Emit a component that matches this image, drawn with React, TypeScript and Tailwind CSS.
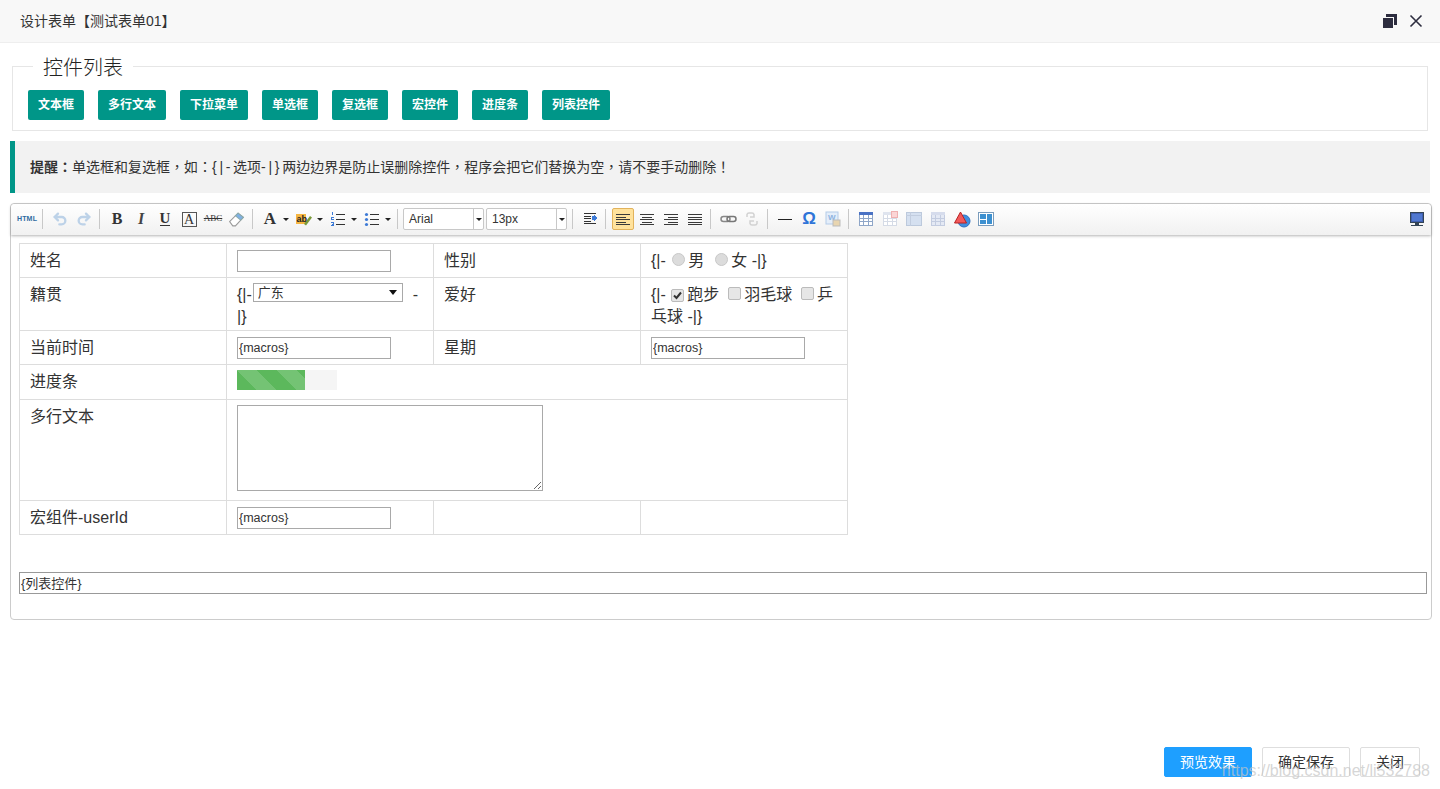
import type { ReactNode } from "react";
import { Redo2, Undo2 } from "lucide-react";

const font = "font-['Liberation_Sans','Noto_Sans_CJK_SC',sans-serif]";
const serif = "font-['Liberation_Serif',serif]";

const controls = ["文本框", "多行文本", "下拉菜单", "单选框", "复选框", "宏控件", "进度条", "列表控件"];

const Sep = () => <span className="ml-[3px] mr-[5px] h-[20px] w-px shrink-0 bg-[#c8c8c8]" />;

const Slot = ({ children, active }: { children: ReactNode; active?: boolean }) => (
  <span
    className={`flex h-[22px] shrink-0 items-center justify-center rounded-[2px] ${
      active ? "mx-px w-[22px] border border-[#e2b35c] bg-[#ffe29c]" : "w-[24px]"
    }`}
  >
    {children}
  </span>
);

const Caret = () => (
  <span className="flex h-[22px] w-[10px] shrink-0 items-center pl-px">
    <span className="h-0 w-0 border-x-[3px] border-t-[3px] border-x-transparent border-t-[#222]" />
  </span>
);

const Lines = ({ align }: { align: "left" | "center" | "right" | "full" }) => {
  const x = align === "center" ? 3 : align === "right" ? 5 : 1;
  const w = align === "full" ? 14 : 10;
  const rows = [
    [1, 14],
    [x, w],
    [1, 14],
    [x, w],
    [1, 14],
  ];
  return (
    <svg width="16" height="16" viewBox="0 0 16 16" shapeRendering="crispEdges">
      {rows.map(([rx, rw], i) => (
        <rect key={i} x={rx} y={3 + i * 2.5} width={rw} height="1" fill="#3a3a3a" />
      ))}
    </svg>
  );
};

const SelectBox = ({ label }: { label: string }) => (
  <span className="flex h-[22px] w-[81px] shrink-0 rounded-[2px] border border-[#c8c8c8] bg-white text-[12px] text-[#333]">
    <span className="flex-1 pl-[5px] leading-[20px]">{label}</span>
    <span className="flex w-[10px] items-center justify-center border-l border-[#c8c8c8]">
      <span className="h-0 w-0 border-x-[3px] border-t-[3px] border-x-transparent border-t-[#222]" />
    </span>
  </span>
);

const TableIcon = ({ head = "#4a72c4", grid = "#8fa6c8", fill = "#fff" }: { head?: string; grid?: string; fill?: string }) => (
  <svg width="14" height="14" viewBox="0 0 14 14" shapeRendering="crispEdges">
    <rect x="0.5" y="0.5" width="13" height="13" fill={fill} stroke={grid} />
    <rect x="0" y="0" width="14" height="3" fill={head} />
    <path d="M0 6.5h14M0 9.5h14M4.5 3v11M9.5 3v11" stroke={grid} fill="none" />
  </svg>
);

const Toolbar = () => (
  <div className="flex h-[31px] items-center rounded-t-[4px] bg-gradient-to-b from-white to-[#f1f1f1] pb-px pl-[4px] pr-[2px] shadow-[0_1px_3px_rgba(0,0,0,0.3)]">
    <Slot>
      <span className="text-[7px] font-bold tracking-[0.2px] text-[#2d6aa0]">HTML</span>
    </Slot>
    <Sep />
    <Slot>
      <Undo2 size={16} strokeWidth={3.5} className="text-[#bdd2e8]" />
    </Slot>
    <Slot>
      <Redo2 size={16} strokeWidth={3.5} className="text-[#bdd2e8]" />
    </Slot>
    <Sep />
    <Slot>
      <span className={`${serif} text-[16px] font-bold text-[#333]`}>B</span>
    </Slot>
    <Slot>
      <span className={`${serif} text-[16px] font-bold italic text-[#444]`}>I</span>
    </Slot>
    <Slot>
      <span className={`${serif} border-b border-[#333] text-[15px] leading-[13px] font-bold text-[#333]`}>U</span>
    </Slot>
    <Slot>
      <span className={`${serif} flex h-[15px] w-[15px] items-center justify-center border border-[#555] text-[14px] text-[#333]`}>A</span>
    </Slot>
    <Slot>
      <span className={`${serif} text-[9px] text-[#333] line-through`}>ABC</span>
    </Slot>
    <Slot>
      <svg width="18" height="18" viewBox="0 0 17 17">
        <path d="M1.5 11 9.5 3l5 4-7.5 8H4.500z" fill="#fff" stroke="#999" />
        <path d="M7 5.500 9.500 3l5 4L12 9.500z" fill="#7fb0e6" stroke="#8aa" />
      </svg>
    </Slot>
    <Sep />
    <Slot>
      <span className={`${serif} text-[17px] font-bold text-[#333]`}>A</span>
    </Slot>
    <Caret />
    <Slot>
      <svg width="17" height="15" viewBox="0 0 17 15">
        <rect x="0" y="2" width="10" height="10" fill="#f5b642" />
        <path d="M8 12l6-8 2 1.500-6 8z" fill="#7a9a3a" />
        <text x="0.500" y="10" fontSize="9" fontWeight="700" fill="#222" fontFamily="Liberation Sans">ab</text>
      </svg>
    </Slot>
    <Caret />
    <Slot>
      <svg width="16" height="16" viewBox="0 0 16 16" shapeRendering="crispEdges">
        <path d="M2 1h1v3H2zM1 6h3v1H2v1h2v1H1V7h2V7H1zM1 11h3v4H1v-1h2v-.5H2v-1h1V12H1z" fill="#3d7ad6" />
        <path d="M6 3h9v1H6zM6 8h9v1H6zM6 13h9v1H6z" fill="#333" />
      </svg>
    </Slot>
    <Caret />
    <Slot>
      <svg width="16" height="16" viewBox="0 0 16 16">
        <circle cx="2.500" cy="3.500" r="1.600" fill="#3d7ad6" />
        <circle cx="2.500" cy="8.500" r="1.600" fill="#3d7ad6" />
        <circle cx="2.500" cy="13.500" r="1.600" fill="#3d7ad6" />
        <path d="M6 3h9v1H6zM6 8h9v1H6zM6 13h9v1H6z" fill="#333" shapeRendering="crispEdges" />
      </svg>
    </Slot>
    <Caret />
    <Sep />
    <span className={`${font} flex gap-[2px]`}>
      <SelectBox label="Arial" />
      <SelectBox label="13px" />
    </span>
    <span className="w-[2px]" />
    <Sep />
    <Slot>
      <svg width="16" height="16" viewBox="0 0 16 16" shapeRendering="crispEdges">
        <path d="M2 2h12v1H2zM2 4.500h7v1H2zM2 7h7v1H2zM2 9.500h7v1H2zM2 12h12v1H2z" fill="#333" />
        <path d="M10 5h2V3.500L15 7l-3 3.500V9h-2z" fill="#3d7ad6" />
      </svg>
    </Slot>
    <Sep />
    <Slot active>
      <Lines align="left" />
    </Slot>
    <Slot>
      <Lines align="center" />
    </Slot>
    <Slot>
      <Lines align="right" />
    </Slot>
    <Slot>
      <Lines align="full" />
    </Slot>
    <Sep />
    <Slot>
      <svg width="17" height="16" viewBox="0 0 17 16" fill="none">
        <rect x="1" y="5.500" width="9" height="5" rx="2.500" stroke="#888" strokeWidth="1.500" />
        <rect x="7" y="5.500" width="9" height="5" rx="2.500" stroke="#777" strokeWidth="1.500" />
      </svg>
    </Slot>
    <Slot>
      <svg width="16" height="16" viewBox="0 0 16 16" fill="none">
        <path d="M3 6V3.500A2 2 0 0 1 5 2h3a2 2 0 0 1 2 1.500V6H6" stroke="#d2d2d2" strokeWidth="1.500" />
        <path d="M13 10v2.500a2 2 0 0 1-2 1.500H8a2 2 0 0 1-2-1.500V10h4" stroke="#d2d2d2" strokeWidth="1.500" />
      </svg>
    </Slot>
    <Sep />
    <Slot>
      <span className="h-px w-[14px] bg-[#222]" />
    </Slot>
    <Slot>
      <span className="font-['Liberation_Sans'] text-[17px] font-bold text-[#2f74d8]">Ω</span>
    </Slot>
    <Slot>
      <svg width="16" height="16" viewBox="0 0 16 16">
        <rect x="1" y="1" width="12" height="12" fill="#e4eefa" stroke="#b4cbe8" />
        <text x="3" y="9" fontSize="8" fontWeight="700" fill="#8db2e0" fontFamily="Liberation Sans">W</text>
        <rect x="8" y="9" width="7" height="6" fill="#e8d5b0" stroke="#bbb" />
      </svg>
    </Slot>
    <Sep />
    <Slot>
      <TableIcon />
    </Slot>
    <Slot>
      <span className="relative flex">
        <TableIcon head="#dfe4ee" grid="#d5dbe6" />
        <span className="absolute right-[-1px] top-[-1px] h-[7px] w-[7px] border border-[#eeb0b0] bg-[#fbd5d5]" />
      </span>
    </Slot>
    <Slot>
      <svg width="16" height="14" viewBox="0 0 16 14" shapeRendering="crispEdges">
        <rect x="0.500" y="0.500" width="15" height="13" fill="#d5e0f0" stroke="#bcc9dc" />
        <path d="M0 3.500h16M4.500 0v14" stroke="#c2cddf" fill="none" />
      </svg>
    </Slot>
    <Slot>
      <TableIcon head="#d6dcec" grid="#c3cce0" fill="#e4e9f4" />
    </Slot>
    <Slot>
      <svg width="17" height="17" viewBox="0 0 17 17">
        <circle cx="10" cy="10" r="6" fill="#3f8fe0" stroke="#2f70c0" />
        <path d="M6.500 1 12.500 12H.500z" fill="#f2585a" stroke="#b82222" />
      </svg>
    </Slot>
    <Slot>
      <svg width="16" height="14" viewBox="0 0 16 14" shapeRendering="crispEdges">
        <rect x="0.500" y="0.500" width="15" height="13" fill="#fff" stroke="#7a9cbc" />
        <rect x="2" y="2" width="6" height="5" fill="#3d90d0" />
        <rect x="2" y="8" width="6" height="4" fill="#3d90d0" />
        <rect x="9" y="2" width="5" height="10" fill="#3d90d0" />
      </svg>
    </Slot>
    <span className="ml-auto">
      <Slot>
        <svg width="14" height="15" viewBox="0 0 14 15" shapeRendering="crispEdges">
          <rect x="0.500" y="0.500" width="13" height="10" fill="#3f5fb0" stroke="#345" />
          <rect x="2" y="2" width="10" height="7" fill="#5078d0" />
          <rect x="5" y="11" width="4" height="2" fill="#345" />
          <rect x="1" y="13" width="12" height="1" fill="#345" />
        </svg>
      </Slot>
    </span>
  </div>
);

const Radio = () => (
  <span className="ml-[2px] mr-[3px] inline-block h-[13px] w-[13px] rounded-full border border-[#c8c8c8] bg-[#dcdcdc] align-[0px]" />
);

const Check = ({ checked }: { checked?: boolean }) => (
  <span
    className={`${checked ? "ml-px" : ""} mr-[3px] inline-flex h-[13px] w-[13px] items-center justify-center rounded-[2px] border border-[#bbb] bg-[#e6e6e6]`}
  >
    {checked && (
      <svg width="9" height="9" viewBox="0 0 9 9">
        <path d="M1 4.500 3.500 7 8 1.500" fill="none" stroke="#333" strokeWidth="2" />
      </svg>
    )}
  </span>
);

const Macro = () => (
  <input
    readOnly
    value="{macros}"
    className="block h-[22px] w-[154px] border border-[#a9a9a9] bg-white px-px text-[12.5px] text-[#333]"
  />
);

const td = "border border-[#ddd] px-[10px] pt-[6px] align-top text-[16px] leading-[22px] text-[#333]";

export default function App() {
  return (
    <div className={`${font} relative flex h-screen flex-col overflow-hidden bg-white`}>
      <div className="flex h-[43px] shrink-0 items-center justify-between border-b border-[#eee] bg-[#f8f8f8] pl-[20px] pr-[17px]">
        <span className="text-[14px] text-[#333]">设计表单【测试表单01】</span>
        <div className="flex items-center gap-[12px]">
          <svg width="14" height="14" viewBox="0 0 14 14" shapeRendering="crispEdges">
            <path d="M3 0h11v11h-3V3H3z" fill="#2d2d3f" />
            <rect x="0" y="4" width="10" height="10" fill="#2d2d3f" />
          </svg>
          <svg width="14" height="14" viewBox="0 0 14 14">
            <path d="M1.500 1.500l11 11M12.500 1.500l-11 11" stroke="#2d2d3f" strokeWidth="1.600" />
          </svg>
        </div>
      </div>

      <fieldset className="mx-[12px] mt-[9px] border border-[#e6e6e6] px-[15px] pb-[10px] pt-[10px]">
        <legend className="ml-[5px] px-[10px] pt-[4px] text-[20px] leading-[24px] font-light text-[#222]">控件列表</legend>
        <div className="flex gap-[14px]">
          {controls.map((c) => (
            <button key={c} className="h-[30px] rounded-[2px] bg-[#009688] px-[10px] text-[12px] font-bold text-white">
              {c}
            </button>
          ))}
        </div>
      </fieldset>

      <div className="ml-[10px] mr-[10px] mt-[10px] border-l-[5px] border-[#009688] bg-[#f2f2f2] py-[15px] pl-[15px] font-['Liberation_Sans','Noto_Sans_CJK_TC',sans-serif] text-[14px] leading-[22px] text-[#333]">
        <b>提醒：</b>单选框和复选框，如：<span className="tracking-[2.7px]">{"{|-"}</span>选项<span className="tracking-[2.7px]">{"-|}"}</span>两边边界是防止误删除控件，程序会把它们替换为空，请不要手动删除！
      </div>

      <div className="ml-[10px] mr-[8px] mt-[10px] rounded-[4px] border border-[#ccc] bg-white">
        <Toolbar />
        <div className="pb-[25px] pl-[8px] pr-[4px] pt-[8px]">
          <table className="w-[829px] table-fixed border-collapse">
            <tbody>
              <tr className="h-[34px]">
                <td className={td}>姓名</td>
                <td className={td}>
                  <input readOnly className="block h-[22px] w-[154px] border border-[#a9a9a9] bg-white" />
                </td>
                <td className={td}>性别</td>
                <td className={td}>
                  {"{|-"} <Radio />男 &nbsp;<Radio />女 -|{"}"}
                </td>
              </tr>
              <tr className="h-[53px]">
                <td className={td}>籍贯</td>
                <td className={td}>
                  {"{|-"}
                  <span className="relative -mt-px ml-px mr-px inline-block h-[19px] w-[150px] align-top">
                    <select className="block h-[19px] w-full appearance-none overflow-hidden border border-[#a9a9a9] bg-white pl-[4px] text-[13px] leading-[17px] text-[#333]">
                      <option>广东</option>
                    </select>
                    <span className="absolute right-[6px] top-[7px] h-0 w-0 border-x-[4px] border-t-[5px] border-x-transparent border-t-[#111]" />
                  </span>{" "}
                  &nbsp;-|{"}"}
                </td>
                <td className={td}>爱好</td>
                <td className={td}>
                  {"{|-"} <Check checked />跑步 &nbsp;<Check />羽毛球 &nbsp;<Check />乒乓球 -|{"}"}
                </td>
              </tr>
              <tr className="h-[34px]">
                <td className={td}>当前时间</td>
                <td className={td}>
                  <Macro />
                </td>
                <td className={td}>星期</td>
                <td className={td}>
                  <Macro />
                </td>
              </tr>
              <tr className="h-[35px]">
                <td className={td}>进度条</td>
                <td className={td} colSpan={3}>
                  <div className="-mt-px h-[20px] w-[100px] bg-[#f5f5f5]">
                    <div className="h-full w-[68px] bg-[#5cb85c] bg-[linear-gradient(45deg,rgba(255,255,255,.15)_25%,transparent_25%,transparent_50%,rgba(255,255,255,.15)_50%,rgba(255,255,255,.15)_75%,transparent_75%,transparent)] bg-[length:40px_40px]" />
                  </div>
                </td>
              </tr>
              <tr className="h-[101px]">
                <td className={td}>多行文本</td>
                <td className={td} colSpan={3}>
                  <textarea readOnly className="-mt-px block h-[86px] w-[306px] border border-[#a9a9a9] bg-white" />
                </td>
              </tr>
              <tr className="h-[34px]">
                <td className={td}>宏组件-userId</td>
                <td className={td}>
                  <Macro />
                </td>
                <td className={td} />
                <td className={td} />
              </tr>
            </tbody>
          </table>
          <input
            readOnly
            value="{列表控件}"
            className="mt-[37px] block h-[22px] w-full border border-[#999] bg-white px-px pb-[2px] text-[13px] text-[#333]"
          />
        </div>
      </div>

      <div className="mt-auto flex justify-end gap-[10px] pb-[12px] pr-[20px]">
        <button className="h-[30px] rounded-[2px] border border-[#1e9fff] bg-[#1e9fff] px-[15px] text-[14px] text-white">预览效果</button>
        <button className="h-[30px] rounded-[2px] border border-[#dedede] bg-white px-[15px] text-[14px] text-[#333]">确定保存</button>
        <button className="h-[30px] rounded-[2px] border border-[#dedede] bg-white px-[15px] text-[14px] text-[#333]">关闭</button>
      </div>

      <span className="absolute bottom-[6px] right-[10px] text-[16px] text-[#c4c4c4]/70">https://blog.csdn.net/li532788</span>
    </div>
  );
}
